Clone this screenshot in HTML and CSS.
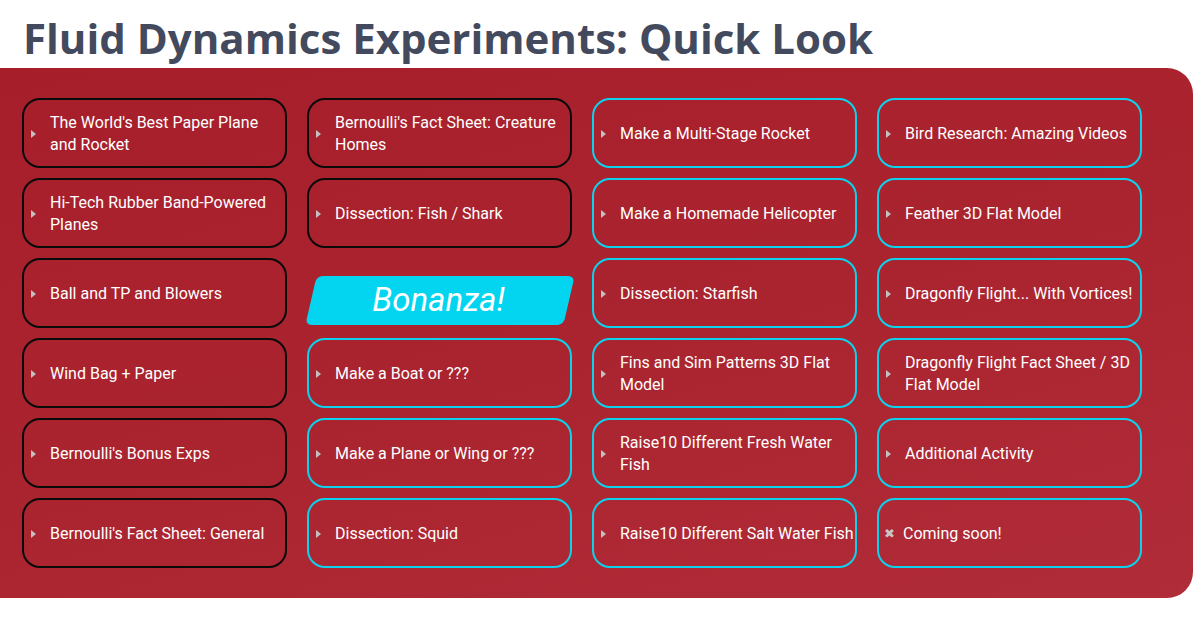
FILE: index.html
```html
<!DOCTYPE html>
<html lang="en">
<head>
<meta charset="utf-8">
<title>Fluid Dynamics Experiments: Quick Look</title>
<link rel="stylesheet" href="styles.css">
</head>
<body>
<header class="page-head">
  <h1 class="title">Fluid Dynamics Experiments: Quick Look</h1>
</header>
<main class="panel">
  <div class="grid">
    <a class="btn btn-dark"><span class="mark"></span><span class="label">The World's Best Paper Plane and Rocket</span></a>
    <a class="btn btn-dark"><span class="mark"></span><span class="label">Hi-Tech Rubber Band-Powered Planes</span></a>
    <a class="btn btn-dark"><span class="mark"></span><span class="label">Ball and TP and Blowers</span></a>
    <a class="btn btn-dark"><span class="mark"></span><span class="label">Wind Bag + Paper</span></a>
    <a class="btn btn-dark"><span class="mark"></span><span class="label">Bernoulli's Bonus Exps</span></a>
    <a class="btn btn-dark"><span class="mark"></span><span class="label">Bernoulli's Fact Sheet: General</span></a>

    <a class="btn btn-dark"><span class="mark"></span><span class="label">Bernoulli's Fact Sheet: Creature Homes</span></a>
    <a class="btn btn-dark"><span class="mark"></span><span class="label">Dissection: Fish / Shark</span></a>
    <div class="bonanza-cell"><div class="bonanza"><span class="bonanza-text">Bonanza!</span></div></div>
    <a class="btn btn-cyan"><span class="mark"></span><span class="label">Make a Boat or ???</span></a>
    <a class="btn btn-cyan"><span class="mark"></span><span class="label">Make a Plane or Wing or ???</span></a>
    <a class="btn btn-cyan"><span class="mark"></span><span class="label">Dissection: Squid</span></a>

    <a class="btn btn-cyan"><span class="mark"></span><span class="label">Make a Multi-Stage Rocket</span></a>
    <a class="btn btn-cyan"><span class="mark"></span><span class="label">Make a Homemade Helicopter</span></a>
    <a class="btn btn-cyan"><span class="mark"></span><span class="label">Dissection: Starfish</span></a>
    <a class="btn btn-cyan"><span class="mark"></span><span class="label">Fins and Sim Patterns 3D Flat Model</span></a>
    <a class="btn btn-cyan"><span class="mark"></span><span class="label">Raise10 Different Fresh Water Fish</span></a>
    <a class="btn btn-cyan"><span class="mark"></span><span class="label">Raise10 Different Salt Water Fish</span></a>

    <a class="btn btn-cyan"><span class="mark"></span><span class="label">Bird Research: Amazing Videos</span></a>
    <a class="btn btn-cyan"><span class="mark"></span><span class="label">Feather 3D Flat Model</span></a>
    <a class="btn btn-cyan"><span class="mark"></span><span class="label">Dragonfly Flight... With Vortices!</span></a>
    <a class="btn btn-cyan"><span class="mark"></span><span class="label">Dragonfly Flight Fact Sheet / 3D Flat Model</span></a>
    <a class="btn btn-cyan"><span class="mark"></span><span class="label">Additional Activity</span></a>
    <a class="btn btn-cyan btn-soon"><span class="mark-x">&#10006;</span><span class="label">Coming soon!</span></a>
  </div>
</main>
</body>
</html>
```

FILE: styles.css
```css
html, body {
  margin: 0;
  padding: 0;
  background: #ffffff;
}

body {
  font-family: Roboto, "Liberation Sans", sans-serif;
  width: 1194px;
  height: 626px;
  overflow: hidden;
}

.page-head {
  height: 68px;
  padding-top: 10px;
  box-sizing: border-box;
}

.title {
  margin: 0;
  padding-left: 23px;
  font-family: "Open Sans", "Liberation Sans", sans-serif;
  font-weight: 700;
  font-size: 42px;
  line-height: 56px;
  color: #434a5d;
}

.panel {
  width: 1193px;
  height: 530px;
  box-sizing: border-box;
  padding: 30px 0 0 22px;
  background: linear-gradient(165deg, #a71e2b 0%, #aa242f 50%, #b02c38 100%);
  border-radius: 0 26px 26px 0;
}

.grid {
  display: grid;
  grid-template-columns: repeat(4, 265px);
  grid-template-rows: repeat(6, 70px);
  grid-auto-flow: column;
  column-gap: 20px;
  row-gap: 10px;
}

.btn {
  display: flex;
  align-items: center;
  box-sizing: border-box;
  height: 70px;
  border: 2px solid #000;
  border-radius: 18px;
  padding: 2px 0 0 7px;
  color: #ffffff;
  font-size: 16px;
  line-height: 22px;
  text-decoration: none;
}

.btn-dark {
  border-color: #0a0a0a;
}

.btn-cyan {
  border-color: #0cd2ee;
}

.mark {
  flex: 0 0 auto;
  width: 0;
  height: 0;
  border-style: solid;
  border-width: 4px 0 4px 5px;
  border-color: transparent transparent transparent #c4bfc1;
  margin-right: 14px;
  margin-top: -1px;
}

.mark-x {
  flex: 0 0 auto;
  width: 19px;
  margin-left: -2px;
  font-size: 13px;
  color: #c9c4c6;
}

.label {
  flex: 1 1 auto;
  margin-right: -1px;
}

.bonanza-cell {
  display: flex;
  align-items: center;
  justify-content: center;
  padding-top: 14px;
}

.bonanza {
  position: relative;
  width: 258px;
  height: 49px;
  display: flex;
  align-items: center;
  justify-content: center;
}

.bonanza::before {
  content: "";
  position: absolute;
  inset: 0;
  background: #03d5f1;
  border-radius: 6px;
  transform: skewX(-13deg);
}

.bonanza-text {
  position: relative;
  font-style: italic;
  font-size: 33px;
  color: #ffffff;
  line-height: 40px;
  margin-left: -2px;
}
```
